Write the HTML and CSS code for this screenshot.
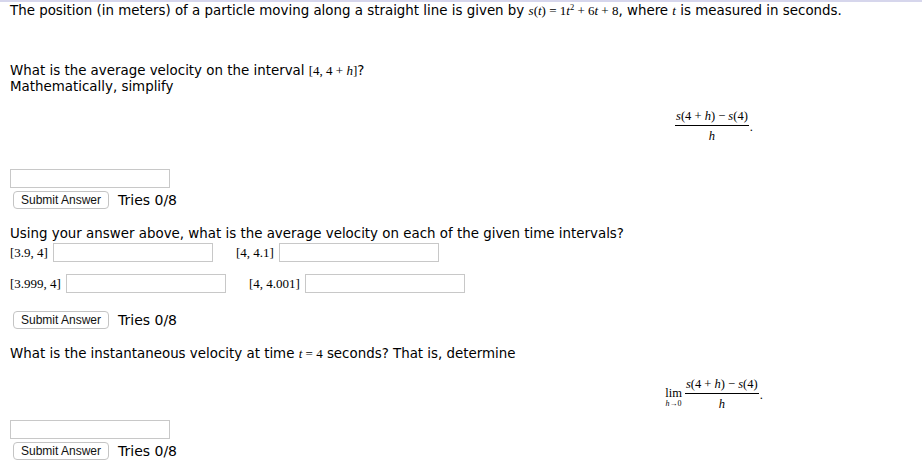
FILE: index.html
```html
<!DOCTYPE html>
<html lang="en">
<head>
    <meta charset="UTF-8">
    <title>Average Velocity</title>
    <link rel="stylesheet" href="styles.css">
</head>
<body>
    <div class="problem">

        <p class="statement">The position (in meters) of a particle moving along a straight line is given by <span class="m"><i>s</i>(<i>t</i>) = 1<i>t</i><sup>2</sup> + 6<i>t</i> + 8</span>, where <span class="m"><i>t</i></span> is measured in seconds.</p>

        <!-- Part 1 -->
        <p class="question q1">What is the average velocity on the interval <span class="m">[4, 4 + <i>h</i>]</span>?<br>Mathematically, simplify</p>

        <div class="display d1">
            <span class="frac">
                <span class="num"><i>s</i>(4 + <i>h</i>) − <i>s</i>(4)</span>
                <span class="den"><i>h</i></span>
            </span>
            <span class="dot">.</span>
        </div>

        <input type="text" class="answer a1">
        <div class="submit-row">
            <button>Submit Answer</button>
            <span class="tries">Tries 0/8</span>
        </div>

        <!-- Part 2 -->
        <p class="question q2">Using your answer above, what is the average velocity on each of the given time intervals?</p>

        <div class="interval-row r1">
            <span class="m label">[3.9, 4]</span>
            <input type="text" class="answer">
            <span class="m label next">[4, 4.1]</span>
            <input type="text" class="answer">
        </div>
        <div class="interval-row r2">
            <span class="m label">[3.999, 4]</span>
            <input type="text" class="answer">
            <span class="m label next">[4, 4.001]</span>
            <input type="text" class="answer">
        </div>

        <div class="submit-row s2">
            <button>Submit Answer</button>
            <span class="tries">Tries 0/8</span>
        </div>

        <!-- Part 3 -->
        <p class="question q3">What is the instantaneous velocity at time <span class="m"><i>t</i> = 4</span> seconds? That is, determine</p>

        <div class="display d2">
            <span class="lim">
                <span class="lim-word">lim</span>
                <span class="lim-sub"><i>h</i>→0</span>
            </span>
            <span class="frac">
                <span class="num"><i>s</i>(4 + <i>h</i>) − <i>s</i>(4)</span>
                <span class="den"><i>h</i></span>
            </span>
            <span class="dot">.</span>
        </div>

        <input type="text" class="answer a3">
        <div class="submit-row">
            <button>Submit Answer</button>
            <span class="tries">Tries 0/8</span>
        </div>

    </div>
</body>
</html>
```

FILE: styles.css
```css
body {
    margin: 0;
    padding: 0;
    background-color: #ffffff;
    color: #000000;
    font-family: "DejaVu Sans", Verdana, sans-serif;
    font-size: 13.4px;
    line-height: 16px;
    border-top: 2px solid #d6d6ec;
}

.problem {
    padding: 1px 0 0 10px;
}

p {
    margin: 0;
}

.m {
    font-family: "Liberation Serif", "Times New Roman", serif;
    font-size: 13px;
}

.m sup {
    font-size: 8.5px;
    line-height: 0;
}

.q1 {
    margin-top: 44px;
}

/* displayed math */
.display {
    display: flex;
    justify-content: center;
    align-items: center;
    margin-left: 496px;
    font-family: "Liberation Serif", "Times New Roman", serif;
    font-size: 12.5px;
    height: 36px;
}

.d1 {
    margin-top: 13px;
}

.d2 {
    margin-top: 14px;
}

.frac {
    display: inline-flex;
    flex-direction: column;
    align-items: center;
}

.num {
    line-height: 14px;
    padding: 0 1px 2px;
    border-bottom: 1px solid #000;
}

.den {
    line-height: 14px;
    padding-top: 3px;
}

.dot {
    align-self: center;
    margin-top: 2px;
    margin-left: 1px;
}

.lim {
    display: inline-flex;
    flex-direction: column;
    align-items: center;
    margin-right: 3px;
    margin-top: 7px;
}

.lim-word {
    line-height: 12px;
}

.lim-sub {
    font-size: 8px;
    line-height: 9px;
}

/* answer boxes */
.answer {
    box-sizing: border-box;
    width: 160px;
    height: 19px;
    margin: 0;
    padding: 1px 3px;
    border: 1px solid #c8c8c8;
    border-radius: 0;
    background-color: #fff;
    font-size: 12px;
}

.a1 {
    display: block;
    margin-top: 25px;
}

.a3 {
    display: block;
    margin-top: 8px;
}

.submit-row {
    display: flex;
    align-items: center;
    height: 18px;
    margin-top: 3px;
}

button {
    box-sizing: border-box;
    height: 18px;
    width: 96px;
    margin: 0 9px 0 3px;
    padding: 0;
    font-family: "Liberation Sans", Arial, sans-serif;
    font-size: 12px;
    color: #111;
    background-color: #fff;
    border: 1px solid #c4c4c4;
    border-radius: 4px;
    cursor: pointer;
}

.tries {
    font-size: 14px;
}

.q2 {
    margin-top: 17px;
}

.interval-row {
    display: flex;
    align-items: center;
}

.interval-row .label {
    margin-right: 5px;
}

.interval-row .next {
    margin-left: 23px;
}

.r1 {
    margin-top: 1px;
}

.r2 {
    margin-top: 12px;
}

.s2 {
    margin-top: 18px;
}

.q3 {
    margin-top: 17px;
}
```
